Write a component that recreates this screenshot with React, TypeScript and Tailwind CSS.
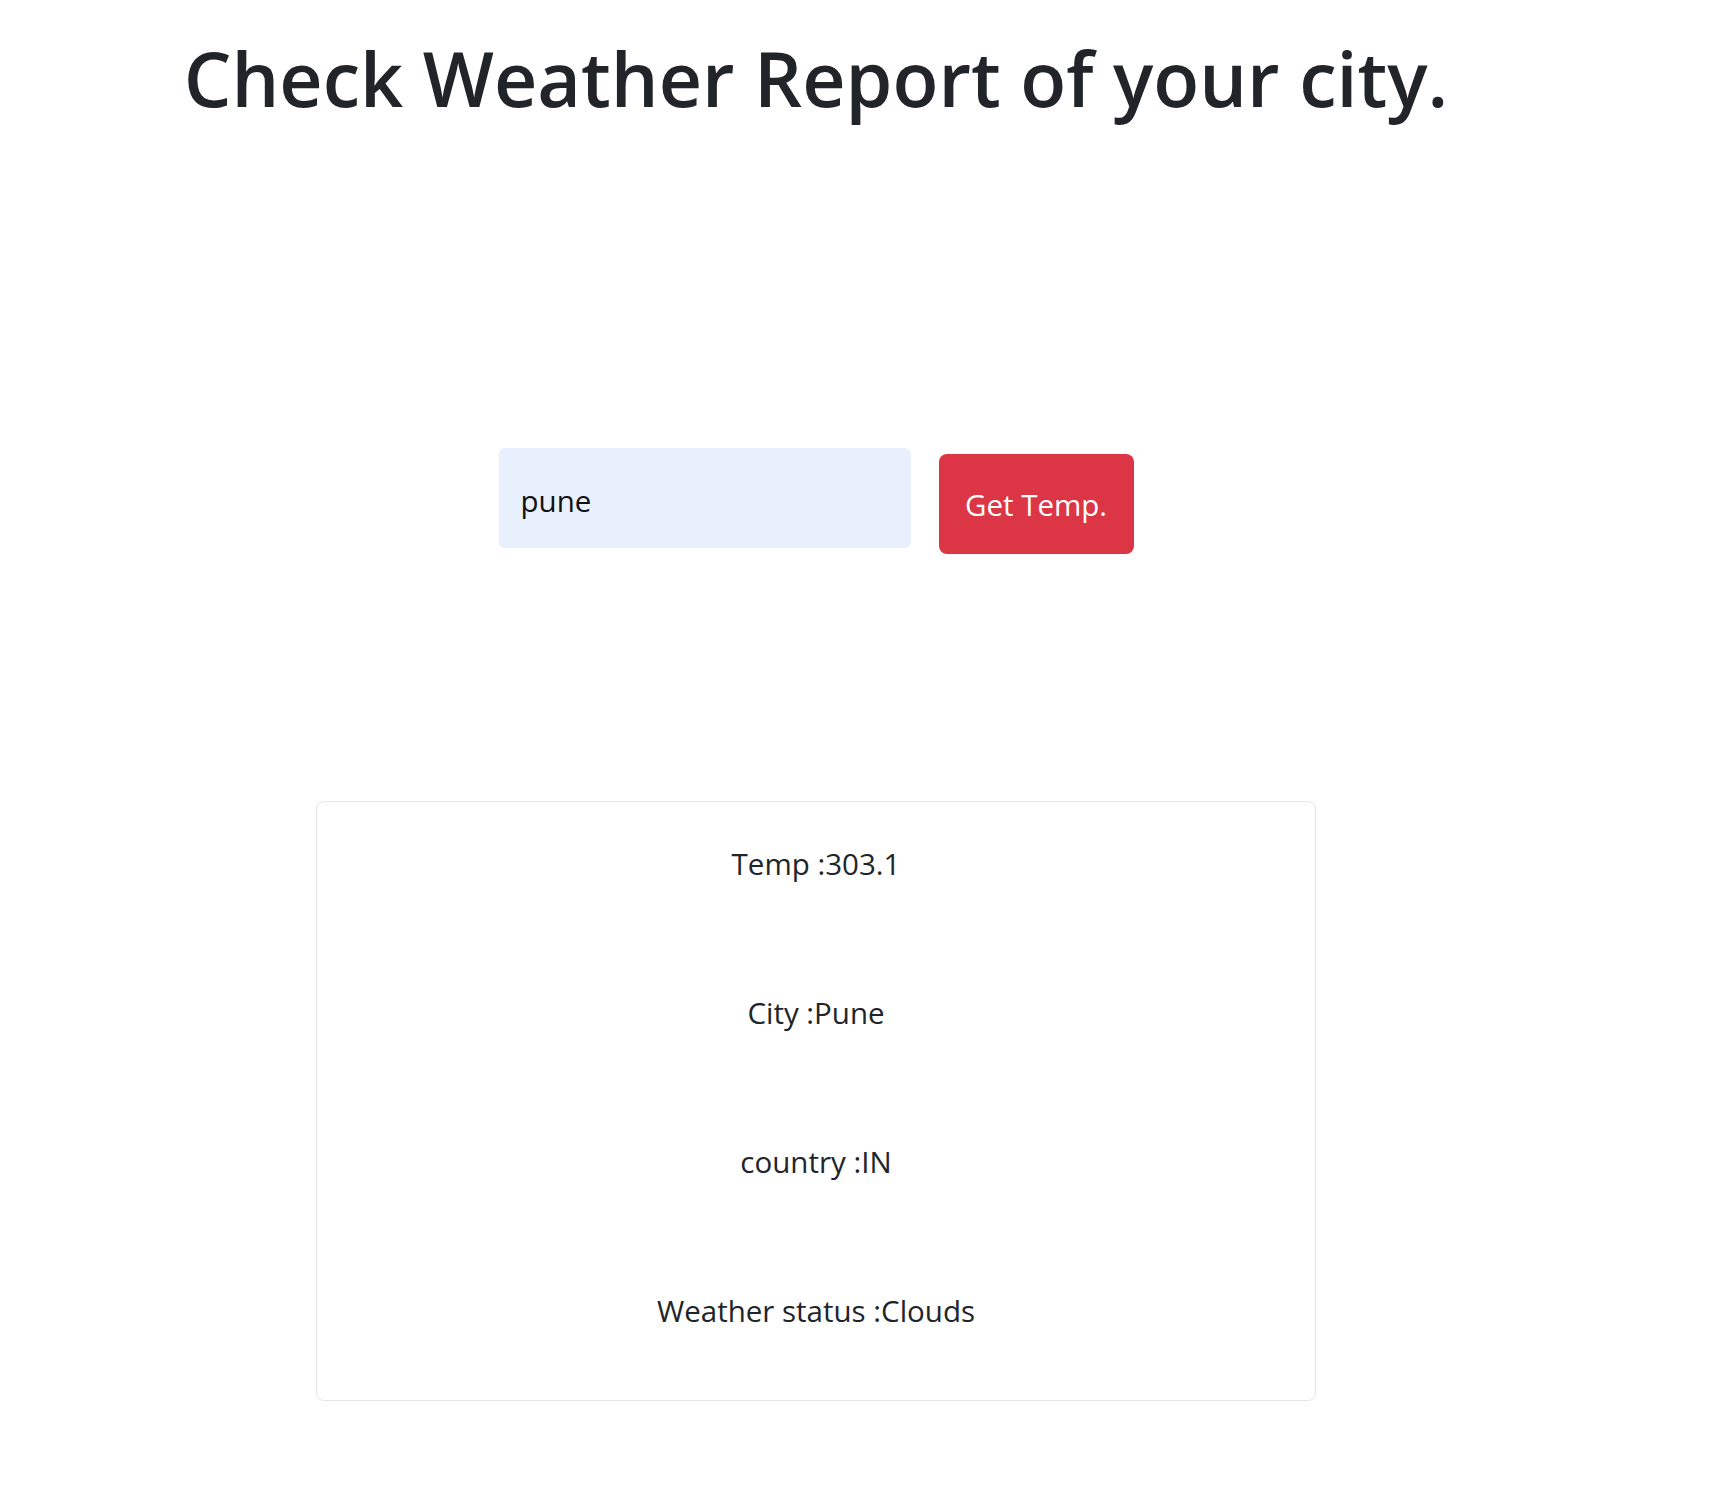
import React from "react";

export default function App() {
  const rows = ["Temp :303.1", "City :Pune", "country :IN", "Weather status :Clouds"];
  return (
    <div
      className="w-[1725px] min-h-[1497px] bg-white text-[#212529]"
      style={{ fontFamily: '"Open Sans", "Noto Sans", sans-serif' }}
    >
      <div className="w-[1632px] flex flex-col items-center">
        <h1 className="mt-[41px] text-[75.3px] font-semibold leading-none">
          Check Weather Report of your city.
        </h1>
        <div className="mt-[332px] flex items-start gap-[28px]">
          <div className="w-[412px] h-[100px] bg-[#e8f0fe] rounded-[6px] pl-[22px] pt-[33px] text-[29.5px] leading-[40px] text-[#111]">
            pune
          </div>
          <button className="w-[195px] h-[100px] mt-[6px] bg-[#dc3545] rounded-[8px] text-white text-[29.5px] leading-none flex items-center justify-center">
            Get Temp.
          </button>
        </div>
        <div className="mt-[247px] w-[1000px] h-[600px] border border-[#e6e6e6] rounded-[8px] flex flex-col items-center pt-[42px] gap-[109px]">
          {rows.map((r) => (
            <div key={r} className="h-[40px] shrink-0 text-[29.5px] leading-[40px]">
              {r}
            </div>
          ))}
        </div>
      </div>
    </div>
  );
}
